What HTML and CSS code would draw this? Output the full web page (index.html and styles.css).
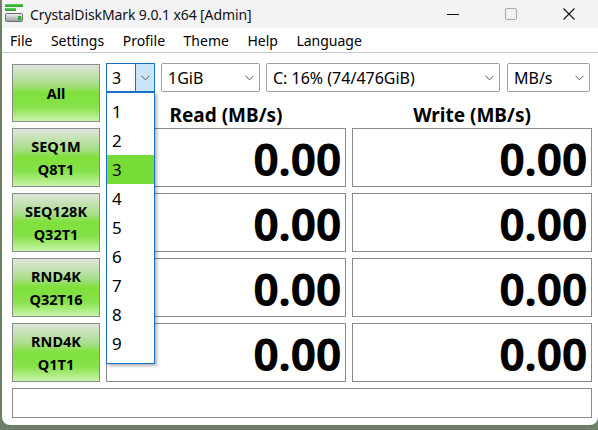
FILE: index.html
```html
<!DOCTYPE html>
<html>
<head>
<meta charset="utf-8">
<link rel="stylesheet" href="styles.css">
</head>
<body>
<div class="window">
  <div class="titlebar">
    <svg class="appicon" width="20" height="20" viewBox="0 0 20 20">
      <defs>
        <linearGradient id="gbar" x1="0" y1="0" x2="0" y2="1">
          <stop offset="0" stop-color="#5fd35a"/>
          <stop offset="1" stop-color="#1f9e2a"/>
        </linearGradient>
        <linearGradient id="gdrive" x1="0" y1="0" x2="0" y2="1">
          <stop offset="0" stop-color="#f2f2f2"/>
          <stop offset="1" stop-color="#9a9a9a"/>
        </linearGradient>
      </defs>
      <rect x="1" y="1" width="18" height="3" fill="url(#gbar)"/>
      <rect x="1" y="5" width="11" height="3" fill="url(#gbar)"/>
      <rect x="1.5" y="10.5" width="17" height="8" rx="1" fill="url(#gdrive)" stroke="#6a6a6a"/>
      <rect x="14" y="13" width="3" height="4" fill="#2fa836"/>
    </svg>
    <span class="title">CrystalDiskMark 9.0.1 x64 [Admin]</span>
    <div class="controls">
      <span class="ctl"><svg width="12" height="12" viewBox="0 0 12 12"><path d="M0 6.5H12" stroke="#111" stroke-width="1"/></svg></span>
      <span class="ctl"><svg width="12" height="12" viewBox="0 0 12 12"><rect x="0.5" y="0.5" width="11" height="11" rx="1.5" fill="none" stroke="#a8a8a8"/></svg></span>
      <span class="ctl"><svg width="12" height="12" viewBox="0 0 12 12"><path d="M0.5 0.5L11.5 11.5M11.5 0.5L0.5 11.5" stroke="#111" stroke-width="1.1"/></svg></span>
    </div>
  </div>
  <div class="menubar">
    <span>File</span><span>Settings</span><span>Profile</span><span>Theme</span><span>Help</span><span>Language</span>
  </div>
  <div class="client">
    <div class="toprow">
      <div class="btn big">All</div>
      <div class="topright">
        <div class="combos">
          <div class="combo c1 focused"><span class="val">3</span><span class="arrow"><svg width="9" height="6" viewBox="0 0 9 6"><path d="M0.5 0.8L4.5 4.8L8.5 0.8" fill="none" stroke="#555"/></svg></span></div>
          <div class="combo c2"><span class="val">1GiB</span><span class="arrow"><svg width="9" height="6" viewBox="0 0 9 6"><path d="M0.5 0.8L4.5 4.8L8.5 0.8" fill="none" stroke="#555"/></svg></span></div>
          <div class="combo c3"><span class="val">C: 16% (74/476GiB)</span><span class="arrow"><svg width="9" height="6" viewBox="0 0 9 6"><path d="M0.5 0.8L4.5 4.8L8.5 0.8" fill="none" stroke="#555"/></svg></span></div>
          <div class="combo c4"><span class="val">MB/s</span><span class="arrow"><svg width="9" height="6" viewBox="0 0 9 6"><path d="M0.5 0.8L4.5 4.8L8.5 0.8" fill="none" stroke="#555"/></svg></span></div>
        </div>
        <div class="headers">
          <div class="hdr">Read (MB/s)</div>
          <div class="hdr">Write (MB/s)</div>
        </div>
      </div>
    </div>
    <div class="row">
      <div class="btn"><span>SEQ1M</span><span>Q8T1</span></div>
      <div class="box">0.00</div>
      <div class="box">0.00</div>
    </div>
    <div class="row">
      <div class="btn"><span>SEQ128K</span><span>Q32T1</span></div>
      <div class="box">0.00</div>
      <div class="box">0.00</div>
    </div>
    <div class="row">
      <div class="btn"><span>RND4K</span><span>Q32T16</span></div>
      <div class="box">0.00</div>
      <div class="box">0.00</div>
    </div>
    <div class="row">
      <div class="btn"><span>RND4K</span><span>Q1T1</span></div>
      <div class="box">0.00</div>
      <div class="box">0.00</div>
    </div>
    <div class="status"></div>
    <div class="dropdown">
      <div class="item">1</div>
      <div class="item">2</div>
      <div class="item sel">3</div>
      <div class="item">4</div>
      <div class="item">5</div>
      <div class="item">6</div>
      <div class="item">7</div>
      <div class="item">8</div>
      <div class="item">9</div>
    </div>
  </div>
</div>
</body>
</html>
```
FILE: styles.css
```css
* { box-sizing: border-box; }
html, body { margin: 0; padding: 0; }
body {
  width: 598px;
  height: 430px;
  overflow: hidden;
  background: #6d7f66;
  font-family: "Noto Sans", "Open Sans", sans-serif;
  color: #000;
}
.window {
  margin-left: 2px;
  width: 596px;
  height: 425px;
  background: #fff;
  border-bottom-left-radius: 8px;
  border-bottom-right-radius: 8px;
  overflow: hidden;
}
.titlebar {
  height: 28px;
  background: #f3f3f3;
  display: flex;
  align-items: center;
  padding-left: 2px;
}
.appicon { margin-right: 6px; margin-top: -2px; }
.title {
  font-size: 14px;
  letter-spacing: -0.1px;
  color: #111;
}
.controls {
  margin-left: auto;
  display: flex;
  height: 100%;
}
.ctl {
  width: 58px;
  display: flex;
  align-items: center;
  justify-content: center;
}
.menubar {
  height: 25px;
  border-bottom: 1px solid #c8c8c8;
  display: flex;
  align-items: center;
  padding-left: 8px;
  gap: 18.5px;
  font-size: 14px;
}
.client {
  position: relative;
  padding: 10px 6px 0 10px;
  display: flex;
  flex-direction: column;
  gap: 6px;
}
.toprow {
  display: flex;
  gap: 6px;
  height: 59px;
}
.btn {
  width: 88px;
  height: 59px;
  border: 1px solid #8c8c8c;
  background: linear-gradient(to bottom, #dfe6dc 0%, #a8de88 35%, #7fe03a 50%, #86e24a 75%, #c9f4aa 100%);
  display: flex;
  flex-direction: column;
  align-items: center;
  justify-content: center;
  font-weight: bold;
  font-size: 14.5px;
  line-height: 23px;
  flex: none;
}
.btn.big { margin-top: 1px; height: 58px; }
.topright {
  flex: 1;
  display: flex;
  flex-direction: column;
}
.combos {
  display: flex;
  gap: 6px;
  height: 29px;
}
.combo {
  border: 1px solid #a0a0a0;
  border-radius: 2px;
  display: flex;
  align-items: center;
  font-size: 16px;
  background: #fff;
}
.combo .val { padding-left: 6px; flex: 1; white-space: nowrap; }
.combo .arrow {
  width: 20px;
  align-self: stretch;
  display: flex;
  align-items: center;
  justify-content: center;
}
.c1 { width: 49px; }
.c2 { width: 99px; }
.c3 { width: 234px; }
.c4 { width: 83px; margin-left: 1px; }
.combo.focused { border-color: #1a73c8; border-radius: 0; }
.combo.focused .val { padding-left: 5px; }
.combo.focused .arrow {
  background: #cce4f7;
  border-left: 1px solid #1a73c8;
  width: 19px;
}
.headers {
  flex: 1;
  display: flex;
  gap: 6px;
  align-items: flex-end;
}
.hdr {
  flex: 1;
  text-align: center;
  font-weight: bold;
  font-size: 19px;
  line-height: 24px;
  margin-bottom: -5px;
}
.row {
  display: flex;
  gap: 6px;
  height: 59px;
}
.box {
  flex: 1;
  border: 1px solid #8a8a8a;
  text-align: right;
  padding-right: 4px;
  padding-top: 2px;
  font-weight: bold;
  font-size: 45px;
  line-height: 55px;
  letter-spacing: -0.5px;
}
.status {
  height: 30px;
  border: 1px solid #8a8a8a;
}
.dropdown {
  position: absolute;
  left: 104px;
  top: 39px;
  width: 49px;
  height: 272px;
  border: 1px solid #1a73c8;
  background: #fff;
  box-shadow: 2px 2px 3px rgba(0,0,0,0.3);
  padding-top: 4px;
}
.item {
  height: 29px;
  line-height: 29px;
  font-size: 17px;
  padding-left: 5px;
}
.item.sel { background: #77dc36; }
```
